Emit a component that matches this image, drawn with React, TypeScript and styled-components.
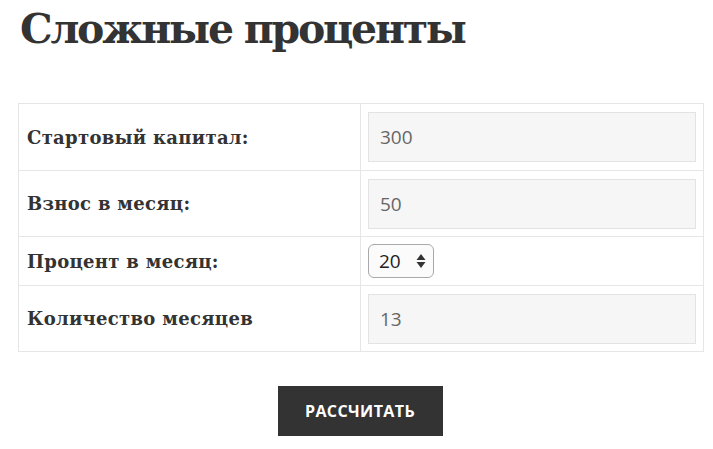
import React from 'react'
import styled, { createGlobalStyle } from 'styled-components'

const Global = createGlobalStyle`
    html, body {
        margin: 0;
        padding: 0;
        background: #fff;
    }
    * {
        box-sizing: border-box;
    }
`

const Page = styled.div`
    width: 713px;
    height: 449px;
    padding: 3px 9px 0 18px;
    overflow: hidden;
`

const Title = styled.h1`
    margin: 0 0 0 2px;
    height: 100px;
    font-family: "DejaVu Serif", "Liberation Serif", serif;
    font-weight: 700;
    font-size: 41px;
    line-height: 53px;
    color: #333;
    letter-spacing: -2.25px;
`

const Table = styled.table`
    width: 686px;
    border-collapse: collapse;
    border: 1px solid #e6e6e6;
`

const Row = styled.tr<{ $h: number }>`
    height: ${p => p.$h}px;
`

const Label = styled.td`
    width: 342px;
    padding: 0 8px;
    border: 1px solid #e6e6e6;
    font-family: "DejaVu Serif", "Liberation Serif", serif;
    font-weight: 700;
    font-size: 18px;
    color: #333;
    letter-spacing: 0.3px;
`

const Cell = styled.td`
    padding: 0 7px;
    border: 1px solid #e6e6e6;
    vertical-align: middle;
`

const Field = styled.input`
    display: block;
    width: 100%;
    height: 50px;
    padding: 0 11px;
    border: 1px solid #e3e3e3;
    background: #f6f6f6;
    font-family: "Open Sans", sans-serif;
    font-size: 19px;
    color: #666;
    outline: none;
`

const SelectWrap = styled.div`
    position: relative;
    width: 66px;
    height: 34px;
`

const Select = styled.select`
    appearance: none;
    width: 100%;
    height: 100%;
    padding: 0 0 0 10px;
    border: 1px solid #a9a9a9;
    border-radius: 6px;
    background: #fbfbfb;
    font-family: "Open Sans", sans-serif;
    font-size: 19px;
    color: #222;
    outline: none;
`

const Arrows = styled.svg`
    position: absolute;
    right: 8px;
    top: 9px;
    pointer-events: none;
`

const Actions = styled.div`
    display: flex;
    justify-content: center;
    width: 684px;
    padding-top: 34px;
`

const Button = styled.button`
    width: 165px;
    height: 50px;
    border: none;
    background: #333;
    color: #fff;
    font-family: "Open Sans", sans-serif;
    font-weight: 700;
    font-size: 16px;
    text-transform: uppercase;
    letter-spacing: 0.4px;
`

const App = (): JSX.Element => {
    return (
        <Page>
            <Global />
            <Title>Сложные проценты</Title>
            <Table>
                <tbody>
                    <Row $h={67}>
                        <Label>Стартовый капитал:</Label>
                        <Cell><Field defaultValue="300" /></Cell>
                    </Row>
                    <Row $h={66}>
                        <Label>Взнос в месяц:</Label>
                        <Cell><Field defaultValue="50" /></Cell>
                    </Row>
                    <Row $h={49}>
                        <Label>Процент в месяц:</Label>
                        <Cell>
                            <SelectWrap>
                                <Select defaultValue="20">
                                    <option>10</option>
                                    <option>20</option>
                                    <option>30</option>
                                </Select>
                                <Arrows width="10" height="16" viewBox="0 0 10 16">
                                    <path d="M5 1 L9.5 7 H0.5 Z" fill="#333" />
                                    <path d="M5 15 L9.5 9 H0.5 Z" fill="#333" />
                                </Arrows>
                            </SelectWrap>
                        </Cell>
                    </Row>
                    <Row $h={66}>
                        <Label>Количество месяцев</Label>
                        <Cell><Field defaultValue="13" /></Cell>
                    </Row>
                </tbody>
            </Table>
            <Actions>
                <Button>Рассчитать</Button>
            </Actions>
        </Page>
    )
}

export default App
